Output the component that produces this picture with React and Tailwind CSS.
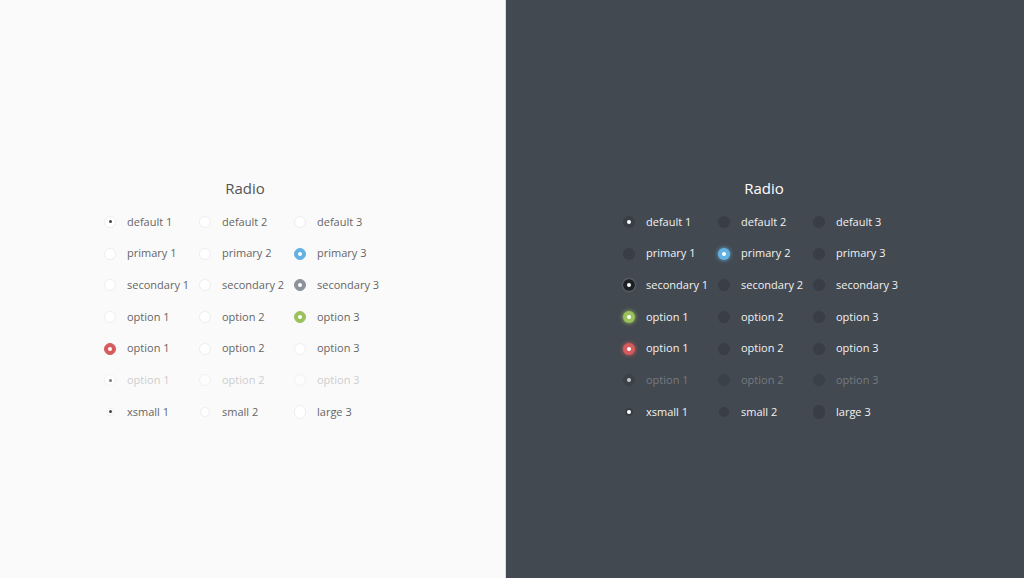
import React from 'react';

// ============================================
// RADIO SHOWCASE — light and dark themes
// ============================================

const SIZES = {
  xs: 'w-[8px] h-[8px]',
  sm: 'w-[10px] h-[10px]',
  md: 'w-[12px] h-[12px]',
  lg: 'w-[14px] h-[14px]',
};

const FILLS = {
  light: {
    default: 'bg-white border border-[#eeeeee]',
    primary: 'bg-[#62b1e2] border border-[#62b1e2]',
    secondary: 'bg-[#8c929a] border border-[#8c929a]',
    success: 'bg-[#9bc15c] border border-[#9bc15c]',
    danger: 'bg-[#d75a5c] border border-[#d75a5c]',
  },
  dark: {
    default: 'bg-[#393e46]',
    primary: 'bg-[#62b1e2] shadow-[0_0_4px_#62b1e2]',
    secondary: 'bg-[#1d2025] shadow-[0_0_2px_#9aa0a8]',
    success: 'bg-[#9bc15c] shadow-[0_0_4px_#9bc15c]',
    danger: 'bg-[#d75a5c] shadow-[0_0_4px_#d75a5c]',
  },
};

const Radio = ({ label, theme, color = 'default', checked, size = 'md', disabled }) => {
  const fill = checked ? FILLS[theme][color] : FILLS[theme].default;
  const dot =
    color === 'default'
      ? theme === 'light'
        ? 'w-[3px] h-[3px] bg-[#444]'
        : 'w-[4px] h-[4px] bg-white'
      : 'w-[4px] h-[4px] bg-white';
  const text =
    theme === 'light'
      ? disabled ? 'text-[#bbbbbb]' : 'text-[#666666]'
      : disabled ? 'text-[#8a8f96]' : 'text-[#f2f2f2]';

  return (
    <label className={`flex items-center h-[31.7px] ${disabled ? 'opacity-70' : ''}`}>
      <span className="w-[12px] flex justify-center">
        <span className={`${SIZES[size]} rounded-full flex items-center justify-center ${fill}`}>
          {checked && <span className={`${dot} rounded-full`} />}
        </span>
      </span>
      <span className={`ml-[11px] text-[11px] ${text}`}>{label}</span>
    </label>
  );
};

const rows = (theme) => {
  const light = theme === 'light';
  return [
    [
      { label: 'default 1', checked: true },
      { label: 'default 2' },
      { label: 'default 3' },
    ],
    [
      { label: 'primary 1', color: 'primary' },
      { label: 'primary 2', color: 'primary', checked: !light },
      { label: 'primary 3', color: 'primary', checked: light },
    ],
    [
      { label: 'secondary 1', color: 'secondary', checked: !light },
      { label: 'secondary 2', color: 'secondary' },
      { label: 'secondary 3', color: 'secondary', checked: light },
    ],
    [
      { label: 'option 1', color: 'success', checked: !light },
      { label: 'option 2', color: 'success' },
      { label: 'option 3', color: 'success', checked: light },
    ],
    [
      { label: 'option 1', color: 'danger', checked: true },
      { label: 'option 2', color: 'danger' },
      { label: 'option 3', color: 'danger' },
    ],
    [
      { label: 'option 1', checked: true, disabled: true },
      { label: 'option 2', disabled: true },
      { label: 'option 3', disabled: true },
    ],
    [
      { label: 'xsmall 1', checked: true, size: 'xs' },
      { label: 'small 2', size: 'sm' },
      { label: 'large 3', size: 'lg' },
    ],
  ];
};

const Panel = ({ theme }) => {
  const light = theme === 'light';
  return (
    <div className="w-[285px] pt-[178px]">
      <h2
        className={`text-[15px] leading-[20px] text-center mb-[8px] pr-[3px] ${
          light ? 'text-[#555555]' : 'text-white'
        }`}
      >
        Radio
      </h2>
      <div className="grid grid-cols-3">
        {rows(theme).flat().map((r, i) => (
          <Radio key={i} theme={theme} {...r} />
        ))}
      </div>
    </div>
  );
};

export default function App() {
  return (
    <div
      className="flex w-[1024px] h-[578px] overflow-hidden"
      style={{ fontFamily: '"Open Sans", "DejaVu Sans", sans-serif' }}
    >
      <div className="w-[506px] bg-[#fafafa] border-r border-[#dcdcdc] pl-[104px]">
        <Panel theme="light" />
      </div>
      <div className="flex-1 bg-[#434950] pl-[117px]">
        <Panel theme="dark" />
      </div>
    </div>
  );
}
